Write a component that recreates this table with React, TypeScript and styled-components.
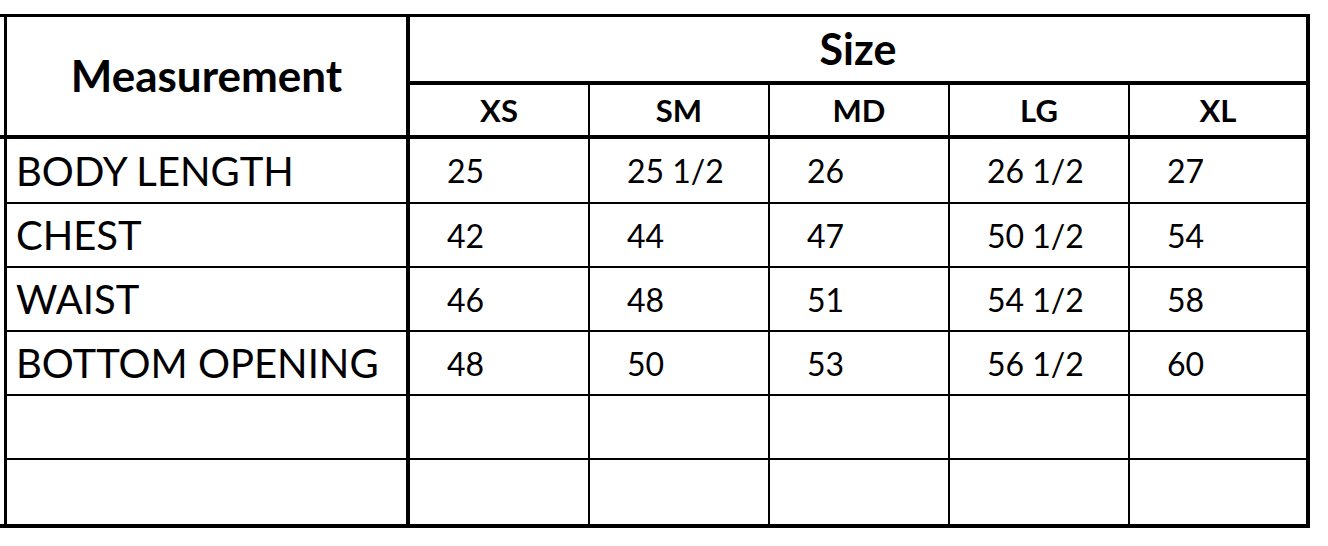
import React from "react";
import styled, { createGlobalStyle } from "styled-components";

const GlobalStyle = createGlobalStyle`
  html, body {
    margin: 0;
    padding: 0;
    background: #ffffff;
  }
  body {
    font-family: Lato, "Noto Sans", sans-serif;
    color: #000000;
  }
`;

const Page = styled.div`
  padding-top: 14px;
  width: 1328px;
  height: 546px;
  box-sizing: border-box;
`;

const Sheet = styled.div`
  width: 1310px;
  border-top: 3px solid #000;
  border-bottom: 4px solid #000;
`;

const HeaderBand = styled.div`
  display: grid;
  grid-template-columns: 4px 406px 900px;
  height: 122px;
  border-bottom: 4px solid #000;
  box-sizing: border-box;
`;

const Gutter = styled.div``;

const MeasureHead = styled.div`
  display: flex;
  align-items: center;
  justify-content: center;
  border-left: 3px solid #000;
  border-right: 4px solid #000;
  font-weight: 700;
  font-size: 44px;
  padding-bottom: 2px;
`;

const SizeBlock = styled.div`
  display: grid;
  grid-template-rows: 68px 50px;
  border-right: 4px solid #000;
`;

const SizeTitle = styled.div`
  display: flex;
  align-items: center;
  justify-content: center;
  border-bottom: 4px solid #000;
  font-weight: 700;
  font-size: 43px;
  padding-bottom: 2px;
`;

const SizeCols = styled.div`
  display: grid;
  grid-template-columns: 180px 180px 180px 180px 176px;
`;

const SizeCol = styled.div<{ $last?: boolean }>`
  display: flex;
  align-items: center;
  justify-content: center;
  border-right: ${(p) => (p.$last ? "none" : "2px solid #000")};
  font-weight: 700;
  font-size: 31px;
`;

const BodyRow = styled.div<{ $h: number }>`
  display: grid;
  grid-template-columns: 4px 406px 180px 180px 180px 180px 180px;
  height: ${(p) => p.$h}px;
`;

const LabelCell = styled.div<{ $last?: boolean }>`
  display: flex;
  align-items: center;
  padding-left: 9px;
  border-left: 3px solid #000;
  border-right: 4px solid #000;
  border-bottom: ${(p) => (p.$last ? "none" : "2px solid #000")};
  font-size: 40px;
  white-space: nowrap;
`;

const ValueCell = styled.div<{ $last?: boolean; $edge?: boolean }>`
  display: flex;
  align-items: center;
  padding-left: 37px;
  border-right: ${(p) => (p.$edge ? "4px solid #000" : "2px solid #000")};
  border-bottom: ${(p) => (p.$last ? "none" : "2px solid #000")};
  font-size: 32px;
  white-space: nowrap;
`;

const sizes = ["XS", "SM", "MD", "LG", "XL"];

const rows: { label: string; values: string[] }[] = [
  { label: "BODY LENGTH", values: ["25", "25 1/2", "26", "26 1/2", "27"] },
  { label: "CHEST", values: ["42", "44", "47", "50 1/2", "54"] },
  { label: "WAIST", values: ["46", "48", "51", "54 1/2", "58"] },
  { label: "BOTTOM OPENING", values: ["48", "50", "53", "56 1/2", "60"] },
  { label: "", values: ["", "", "", "", ""] },
  { label: "", values: ["", "", "", "", ""] },
];

const rowHeights = [65, 64, 64, 64, 64, 64];

const App: React.FC = () => {
  return (
    <>
      <GlobalStyle />
      <Page>
        <Sheet>
          <HeaderBand>
            <Gutter />
            <MeasureHead>Measurement</MeasureHead>
            <SizeBlock>
              <SizeTitle>Size</SizeTitle>
              <SizeCols>
                {sizes.map((s, i) => (
                  <SizeCol key={s} $last={i === sizes.length - 1}>
                    {s}
                  </SizeCol>
                ))}
              </SizeCols>
            </SizeBlock>
          </HeaderBand>

          {rows.map((row, r) => {
            const last = r === rows.length - 1;
            return (
              <BodyRow key={r} $h={rowHeights[r]}>
                <Gutter />
                <LabelCell $last={last}>{row.label}</LabelCell>
                {row.values.map((v, i) => (
                  <ValueCell key={i} $last={last} $edge={i === row.values.length - 1}>
                    {v}
                  </ValueCell>
                ))}
              </BodyRow>
            );
          })}
        </Sheet>
      </Page>
    </>
  );
};

export default App;
